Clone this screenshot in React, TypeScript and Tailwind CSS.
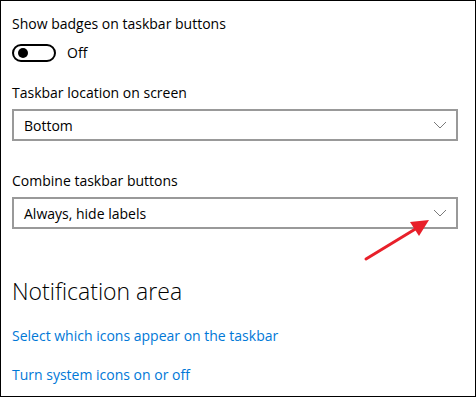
const Select = ({ value }: { value: string }) => (
  <div className="flex h-[32px] w-[446px] items-center justify-between border-2 border-[#999999] pl-[10px] pr-[8px] text-[14px] text-black">
    <span>{value}</span>
    <svg width="14" height="8" viewBox="0 0 14 8" className="mr-[1px]">
      <polyline points="1,1 7,7 13,1" fill="none" stroke="#7a7a7a" strokeWidth="1" />
    </svg>
  </div>
);

export default function App() {
  return (
    <div
      className="relative flex h-[397px] w-[476px] flex-col border border-black bg-white pl-[11px] pt-[13px] text-black"
      style={{ fontFamily: '"Open Sans", "Noto Sans", sans-serif' }}
    >
      <div className="h-[20px] text-[14px] leading-[20px]">Show badges on taskbar buttons</div>

      <div className="mt-[9px] flex items-center gap-[11px]">
        <div className="flex h-[18px] w-[44px] items-center rounded-full border-2 border-black pl-[4px]">
          <div className="h-[10px] w-[10px] rounded-full bg-black" />
        </div>
        <span className="text-[14px] leading-[20px]">Off</span>
      </div>

      <div className="mt-[20px] h-[20px] text-[14px] leading-[20px]">Taskbar location on screen</div>
      <div className="mt-[6px]">
        <Select value="Bottom" />
      </div>

      <div className="mt-[30px] h-[20px] text-[14px] leading-[20px]">Combine taskbar buttons</div>
      <div className="mt-[6px]">
        <Select value="Always, hide labels" />
      </div>

      <div className="mt-[46px] h-[32px] text-[23px] font-light leading-[32px]">Notification area</div>

      <div className="mt-[19px] h-[20px] text-[14px] leading-[20px] text-[#0078d7]">
        Select which icons appear on the taskbar
      </div>
      <div className="mt-[19px] h-[20px] text-[14px] leading-[20px] text-[#0078d7]">
        Turn system icons on or off
      </div>

      <svg className="absolute left-0 top-0" width="476" height="397" viewBox="0 0 476 397">
        <line x1="365" y1="258" x2="416" y2="227" stroke="#e8202a" strokeWidth="3" strokeLinecap="round" />
        <polygon points="428,219 409,221 418,235" fill="#e8202a" />
      </svg>
    </div>
  );
}
